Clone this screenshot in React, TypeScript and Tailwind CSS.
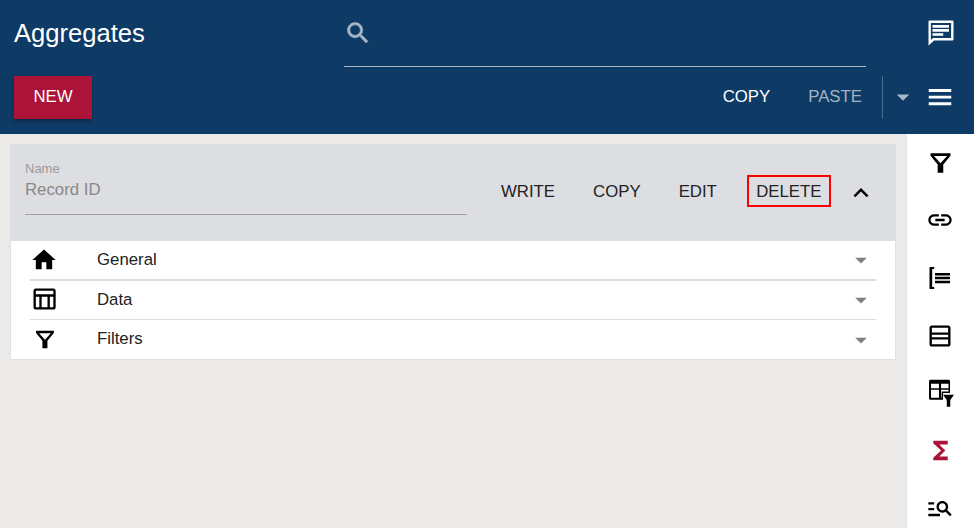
import React from "react";

const I = ({ d, className = "", size = 24, rule, stroke }: { d: string; className?: string; size?: number; rule?: "evenodd"; stroke?: number }) => (
  <svg width={size} height={size} viewBox="0 0 24 24" fill="currentColor" className={className} stroke={stroke ? "currentColor" : undefined} strokeWidth={stroke}>
    <path d={d} fillRule={rule} clipRule={rule} />
  </svg>
);

const P = {
  search: "M15.500 14h-.79l-.28-.27C15.410 12.590 16 11.110 16 9.500 16 5.910 13.090 3 9.500 3S3 5.910 3 9.500 5.910 16 9.500 16c1.610 0 3.090-.59 4.230-1.570l.27.28v.79l5 4.990L20.490 19l-4.990-5zm-6 0C7.010 14 5 11.990 5 9.500S7.010 5 9.500 5 14 7.010 14 9.500 11.990 14 9.500 14z",
  chat: "M3 2h18c.6 0 1 .4 1 1v14c0 .6-.4 1-1 1H6.500L2 22V3c0-.6.4-1 1-1zM3.900 3.900V17.600L5.600 15.900H20.100V3.900zM5.200 5.600H18.400V7.800H5.200zM5.200 8.800H18.400V11H5.200zM5.200 12.200H13.800V14.200H5.200z",
  drop: "M7 10l5 5 5-5z",
  menu: "M3 18.500h18v-2.300H3v2.300zm0-5.300h18v-2.300H3v2.300zm0-7.600v2.300h18V5.600H3z",
  home: "M10 20v-6h4v6h5v-8h3L12 3 2 12h3v8z",
  table: "M20 3H5c-1.100 0-2 .9-2 2v14c0 1.100.9 2 2 2h15c1.100 0 2-.9 2-2V5c0-1.100-.9-2-2-2zm0 2v3H5V5h15zm-5 14h-5v-9h5v9zM5 10h3v9H5v-9zm12 9v-9h3v9h-3z",
  filter: "M3.900 3.600H21V5.800L14.800 13.300V20.300H10V13.300L3.900 5.800zM6.800 5.900H18.100L12.400 12.300z",
  less: "M12 8l-6 6 1.410 1.410L12 10.830l4.590 4.580L18 14z",
  link: "M3.900 12c0-1.710 1.390-3.100 3.100-3.100h4V7H7c-2.760 0-5 2.240-5 5s2.240 5 5 5h4v-1.900H7c-1.710 0-3.100-1.390-3.100-3.100zM8 13h8v-2H8v2zm9-6h-4v1.900h4c1.710 0 3.100 1.390 3.100 3.100s-1.390 3.100-3.100 3.100h-4V17h4c2.760 0 5-2.240 5-5s-2.240-5-5-5z",
  bracket: "M3 2.600H7V4.300H5.300V19.700H7V21.400H3zM7.700 7.700H20.600V9.800H7.700zM7.700 11H20.600V13.100H7.700zM7.700 14.400H20.600V16.500H7.700z",
  rows: "M5 3h14c1.100 0 2 .9 2 2v14c0 1.100-.9 2-2 2H5c-1.100 0-2-.9-2-2V5c0-1.100.9-2 2-2zm0 2v4h14V5H5zm0 6v2h14v-2H5zm0 4v4h14v-4H5z",
  tableFilter: "M4 .7H19.200c.8 0 1.400.6 1.400 1.400V12H14.600V17.800H4c-.8 0-1.400-.6-1.400-1.400V2.100C2.600 1.300 3.200.7 4 .7zM4.300 4.100V8H11.100V4.100zM12.900 4.100V8H19.300V4.100zM4.300 9.300V16.100H11.100V9.300zM12.900 9.300V16.100H13.400V10.700H19.300V9.300zM14.600 13.500H24L20.800 18V23.800H17.800V18z",
  sigma: "M18 4H6v2l6.500 6L6 18v2h12v-3h-7l5-5-5-5h7z",
  manage: "M7 9H2V7h5v2zm0 3H2v2h5v-2zm13.590 7l-3.830-3.830c-.8.520-1.740.830-2.760.830-2.760 0-5-2.240-5-5s2.240-5 5-5 5 2.240 5 5c0 1.020-.31 1.960-.83 2.750L22 17.590 20.590 19zM17 11c0-1.650-1.350-3-3-3s-3 1.350-3 3 1.350 3 3 3 3-1.350 3-3zM2 19h10v-2H2v2z",
};

const Row = ({ icon, iconSize, iconCls = "", textCls = "", label, cls }: { icon: string; iconSize: number; iconCls?: string; textCls?: string; label: string; cls: string }) => (
  <div className={`flex items-center mx-[19px] ${cls}`}>
    <div className={`w-[28px] flex justify-center shrink-0 text-black ${iconCls}`}>
      <I d={icon} size={iconSize} rule="evenodd" />
    </div>
    <div className={`ml-[39px] flex-1 text-[16.8px] leading-[20px] text-[#222222] ${textCls}`}>{label}</div>
    <I d={P.drop} size={28} className="text-[#808080] mr-[1px]" />
  </div>
);

export default function App() {
  return (
    <div className="w-[974px] h-[528px] overflow-hidden flex flex-col bg-[#ebeae8] font-['Liberation_Sans',Arial,sans-serif]">
      <header className="h-[134px] shrink-0 bg-[#0e3b66] text-white flex flex-col">
        <div className="h-[67px] flex">
          <div className="w-[344px] pl-[14px] pt-[18px] text-[25.6px] leading-[30px]">Aggregates</div>
          <div className="w-[522px] border-b border-[#a8b4c2] pt-[19px]">
            <I d={P.search} size={28} stroke={0.5} className="text-[#a9b8c8]" />
          </div>
          <div className="flex-1 flex justify-end pr-[18px] pt-[18px]">
            <I d={P.chat} size={30} rule="evenodd" />
          </div>
        </div>
        <div className="flex-1 flex items-start pt-[9px] pl-[14px]">
          <button className="w-[78px] h-[43px] pb-[2px] bg-[#ab1438] text-[16.8px] shadow-[0_2px_4px_rgba(0,0,0,0.3)]">NEW</button>
          <div className="ml-auto flex items-center h-[43px]">
            <span className="text-[16.8px] pb-[2px]">COPY</span>
            <span className="text-[16.8px] pb-[2px] ml-[38px] text-[#a4b2c2]">PASTE</span>
            <div className="w-px h-[43px] bg-[#4b6b8c] ml-[20px]" />
            <I d={P.drop} size={30} className="text-[#a9b8c8] ml-[5px] mb-[1px]" />
            <I d={P.menu} size={30} className="ml-[7px] mr-[19px] mb-[2px]" />
          </div>
        </div>
      </header>
      <div className="flex flex-1 min-h-0">
        <main className="flex-1 pt-[10px] pl-[10px] pr-[10px]">
          <div className="bg-white border border-[#e0e0e0] border-t-0">
            <div className="h-[97px] bg-[#dddee2] -mx-px flex items-start pl-[15px]">
              <div className="w-[442px] h-[71px] border-b border-[#a0a0a0] pt-[17px]">
                <div className="text-[13px] leading-[16px] text-[#9a9a9a]">Name</div>
                <div className="text-[16.8px] leading-[20px] mt-[3px] text-[#888888]">Record ID</div>
              </div>
              <div className="flex items-center h-[32px] mt-[31px] text-[16.8px] leading-[20px] text-[#222222]">
                <span className="ml-[34px] pt-[1px]">WRITE</span>
                <span className="ml-[38px] pt-[1px]">COPY</span>
                <span className="ml-[38px] pt-[1px]">EDIT</span>
                <span className="ml-[30px] h-[32px] w-[84px] pt-[1px] border-2 border-[#ff0000] flex items-center justify-center">DELETE</span>
                <I d={P.less} size={30} className="ml-[15px] mt-[3px] text-black" />
              </div>
            </div>
            <Row icon={P.home} iconSize={28} label="General" cls="h-[40px] border-b-2 border-[#dddddd]" />
            <Row icon={P.table} iconSize={28} iconCls="mb-[3px]" label="Data" cls="h-[39px] border-b border-[#dddddd]" />
            <Row icon={P.filter} iconSize={25} iconCls="mb-[1px]" textCls="mb-[2px]" label="Filters" cls="h-[39px]" />
          </div>
        </main>
        <aside className="w-[68px] shrink-0 pr-px bg-white border-l border-[#e2e2e2] flex flex-col items-center text-black">
          {[P.filter, P.link, P.bracket, P.rows, P.tableFilter, P.sigma, P.manage].map((d, i) => (
            <div key={i} className={`h-[57.6px] shrink-0 flex items-center justify-center ${i === 5 ? "text-[#ab1438]" : ""}`}>
              <I d={d} size={i === 5 ? 29 : 28} rule="evenodd" />
            </div>
          ))}
        </aside>
      </div>
    </div>
  );
}
